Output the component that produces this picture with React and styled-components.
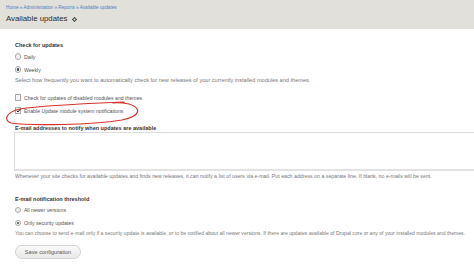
import React from 'react'
import styled, { createGlobalStyle } from 'styled-components'

const Global = createGlobalStyle`
    html, body {
        margin: 0;
        padding: 0;
        background: #fff;
        overflow: hidden;
    }
    body {
        font-family: "Liberation Sans", Arial, sans-serif;
    }
`
const Page = styled.div`
    position: relative;
    width: 474px;
    height: 273px;
    overflow: hidden;
`
const Header = styled.div`
    height: 29px;
    background: #e1e0db;
    padding: 0 6px;
    box-sizing: border-box;
`
const Breadcrumb = styled.div`
    padding-top: 4px;
    height: 7px;
    line-height: 7px;
    font-size: 4.7px;
    color: #4f7fbf;
`
const Title = styled.h1`
    margin: 3px 0 0;
    display: flex;
    align-items: center;
    gap: 5px;
    font-size: 7.8px;
    line-height: 10px;
    font-weight: normal;
    color: #2a2a2a;
`
const Content = styled.div`
    padding: 11px 0 0 15px;
    display: flex;
    flex-direction: column;
`
const Label = styled.div`
    height: ${props => props.$h || 10}px;
    line-height: ${props => props.$h || 10}px;
    margin-top: ${props => props.$mt || 0}px;
    font-size: 5.5px;
    font-weight: bold;
    color: #333;
`
const Option = styled.label`
    display: flex;
    align-items: center;
    gap: 2.5px;
    height: ${props => props.$h || 13}px;
    margin-top: ${props => props.$mt || 0}px;
    font-size: 5.2px;
    color: #555;
`
const Radio = styled.span`
    width: 4.4px;
    height: 4.4px;
    border-radius: 50%;
    border: 0.6px solid #aaa;
    background: #f4f4f4;
    display: flex;
    align-items: center;
    justify-content: center;
    &::after {
        content: '';
        width: 2.2px;
        height: 2.2px;
        border-radius: 50%;
        background: ${props => props.$checked ? '#444' : 'transparent'};
    }
`
const Box = styled.span`
    width: 4.4px;
    height: 4.4px;
    border: 0.6px solid #aaa;
    background: #f4f4f4;
    border-radius: 0.5px;
    position: relative;
`
const Help = styled.div`
    height: 9px;
    line-height: 9px;
    margin-top: ${props => props.$mt || 0}px;
    font-size: ${props => props.$fs || 5.2}px;
    color: #777;
    white-space: nowrap;
`
const TextArea = styled.div`
    height: 39px;
    box-sizing: border-box;
    margin-left: -1px;
    margin-right: -4px;
    border: 1px solid #dcdcdc;
    border-top-width: 1.5px;
    border-bottom: 2.5px solid #e2e2e2;
    background: #fff;
`
const Button = styled.div`
    margin-top: 7px;
    width: 66px;
    height: 14px;
    box-sizing: border-box;
    border: 0.7px solid #d2d2d2;
    border-radius: 7px;
    background: linear-gradient(#fafafa, #e8e8e8);
    display: flex;
    align-items: center;
    justify-content: center;
    font-size: 5.6px;
    color: #555;
`
const Scribble = styled.svg`
    position: absolute;
    left: 0;
    top: 97px;
    pointer-events: none;
`

function Gear() {
    return (
        <svg width="5" height="5" viewBox="0 0 10 10">
            <circle cx="5" cy="5" r="3" fill="none" stroke="#222" strokeWidth="2" />
            <g stroke="#222" strokeWidth="1.6">
                <line x1="5" y1="0.5" x2="5" y2="2" />
                <line x1="5" y1="8" x2="5" y2="9.5" />
                <line x1="0.5" y1="5" x2="2" y2="5" />
                <line x1="8" y1="5" x2="9.5" y2="5" />
            </g>
        </svg>
    )
}

function Check() {
    return (
        <Box>
            <svg width="5" height="5" viewBox="0 0 10 10" style={{ position: 'absolute', left: -0.5, top: -0.5 }}>
                <path d="M1.5 5.5 L4 8 L9 1.5" fill="none" stroke="#222" strokeWidth="2" />
            </svg>
        </Box>
    )
}

export default function App() {
    return (
        <Page>
            <Global />
            <Header>
                <Breadcrumb>Home » Administration » Reports » Available updates</Breadcrumb>
                <Title>Available updates <Gear /></Title>
            </Header>
            <Content>
                <Label>Check for updates</Label>
                <Option><Radio />Daily</Option>
                <Option><Radio $checked />Weekly</Option>
                <Help $fs={5.6}>Select how frequently you want to automatically check for new releases of your currently installed modules and themes.</Help>
                <Option $mt={6}><Box />Check for updates of disabled modules and themes</Option>
                <Option><Check />Enable Update module system notifications</Option>
                <Label $h={8} $mt={7}>E-mail addresses to notify when updates are available</Label>
                <TextArea />
                <Help $mt={1} $fs={5.25}>Whenever your site checks for available updates and finds new releases, it can notify a list of users via e-mail. Put each address on a separate line. If blank, no e-mails will be sent.</Help>
                <Label $h={8} $mt={14}>E-mail notification threshold</Label>
                <Option $mt={1} $h={12.5}><Radio />All newer versions</Option>
                <Option $h={12.5}><Radio $checked />Only security updates</Option>
                <Help $fs={5.1}>You can choose to send e-mail only if a security update is available, or to be notified about all newer versions. If there are updates available of Drupal core or any of your installed modules and themes.</Help>
                <Button>Save configuration</Button>
            </Content>
            <Scribble width="145" height="35" viewBox="0 0 145 35">
                <path d="M124 5 C100 6, 45 8, 20 12 C6 15, 3 23, 11 26 C30 29, 90 28, 122 23 C141 19, 142 11, 129 7 C124 6, 119 5, 113 6"
                    fill="none" stroke="#d8322a" strokeWidth="1.2" strokeLinecap="round" />
            </Scribble>
        </Page>
    )
}
